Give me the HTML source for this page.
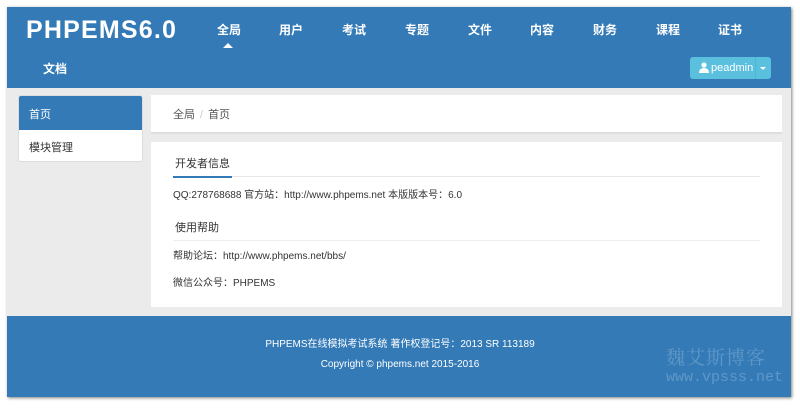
<!DOCTYPE html>
<html><head><meta charset="utf-8"><style>
*{margin:0;padding:0;box-sizing:border-box}
body{width:800px;height:408px;background:#fff;font-family:"Liberation Sans","Noto Sans CJK SC",sans-serif;position:relative;overflow:hidden}
.frame{position:absolute;left:7px;top:7px;width:784px;height:390px;background:#ebebeb;box-shadow:1px 1px 3px rgba(0,0,0,.5);overflow:hidden}
.hdr{position:absolute;left:0;top:0;width:784px;height:81px;background:#337ab7}
.logo{position:absolute;left:19px;top:9px;color:#fff;font-size:25px;font-weight:bold;letter-spacing:1.2px}
.nav{position:absolute;top:14px;color:#fff;font-size:12px;font-weight:bold;transform:translateX(-50%)}
.caret{position:absolute;left:216px;top:36px;width:0;height:0;border-left:5px solid transparent;border-right:5px solid transparent;border-bottom:5px solid #fff}
.btn{position:absolute;left:683px;top:50px;width:81px;height:22px;background:#5bc0de;border-radius:3px;color:#fff;font-size:11px}
.btn span{position:absolute;left:21px;top:5px}
.btn .sep{position:absolute;left:65px;top:0;width:1px;height:22px;background:#46b8da}
.btn .dd{position:absolute;left:70px;top:10px;border-left:3px solid transparent;border-right:3px solid transparent;border-top:3px solid #fff}
.side{position:absolute;left:11px;top:88px;width:125px;height:67px;background:#fff;border:1px solid #ddd;border-radius:3px;overflow:hidden;font-size:11px}
.side .a{height:34px;background:#337ab7;color:#fff;padding:10px 10px}
.side .b{padding:9px 10px;color:#333}
.bc{position:absolute;left:144px;top:88px;width:631px;height:39px;background:#fff;border-bottom:2px solid #ddd;font-size:11px;color:#555;padding:11px 22px}
.bc i{font-style:normal;color:#ccc;margin:0 5px}
.main{position:absolute;left:144px;top:135px;width:631px;height:165px;background:#fff;font-size:10px;color:#333}
.h{position:absolute;left:22px;width:587px;border-bottom:1px solid #e8e8e8;height:21px;font-size:11px}
.h span{display:inline-block;padding:0 2px;border-bottom:2px solid #337ab7;height:22px;line-height:16px}
.t{position:absolute;left:22px}
.ft{position:absolute;left:0;top:309px;width:784px;height:81px;background:#337ab7;color:#fff;font-size:10px;text-align:center}
.wm{position:absolute;color:rgba(255,255,255,.22);font-family:"Noto Serif CJK SC","Liberation Serif",serif}
</style></head><body><div class="frame">
<div class="hdr">
<div class="logo">PHPEMS6.0</div>
<div class="nav" style="left:222px">全局</div>
<div class="nav" style="left:284px">用户</div>
<div class="nav" style="left:347px">考试</div>
<div class="nav" style="left:410px">专题</div>
<div class="nav" style="left:473px">文件</div>
<div class="nav" style="left:535px">内容</div>
<div class="nav" style="left:598px">财务</div>
<div class="nav" style="left:661px">课程</div>
<div class="nav" style="left:723px">证书</div>
<div class="caret"></div>
<div class="nav" style="left:48px;top:53px">文档</div>
<div class="btn"><svg style="position:absolute;left:9px;top:5px" width="10" height="11" viewBox="0 0 10 11"><circle cx="5" cy="3" r="2.6" fill="#fff"/><path d="M0 11 Q0 6 5 6 Q10 6 10 11Z" fill="#fff"/></svg><span>peadmin</span><div class="sep"></div><div class="dd"></div></div>
</div>
<div class="side"><div class="a">首页</div><div class="b">模块管理</div></div>
<div class="bc">全局<i>/</i>首页</div>
<div class="main">
<div class="h" style="top:14px"><span>开发者信息</span></div>
<div class="t" style="top:44px">QQ:278768688 官方站：http://www.phpems.net 本版版本号：6.0</div>
<div class="h" style="top:78px;border-bottom-color:#eee"><span style="border:0">使用帮助</span></div>
<div class="t" style="top:105px">帮助论坛：http://www.phpems.net/bbs/</div>
<div class="t" style="top:132px">微信公众号：PHPEMS</div>
</div>
<div class="ft">
<div style="position:absolute;left:0;width:786px;top:19px">PHPEMS在线模拟考试系统 著作权登记号：2013 SR 113189</div>
<div style="position:absolute;left:0;width:786px;top:43px">Copyright © phpems.net 2015-2016</div>
<div class="wm" style="left:659px;top:27px;font-size:19px;letter-spacing:1px">魏艾斯博客</div>
<div class="wm" style="left:659px;top:53px;font-size:15px;font-family:'Liberation Mono',monospace">www.vpsss.net</div>
</div>
</div></body></html>
